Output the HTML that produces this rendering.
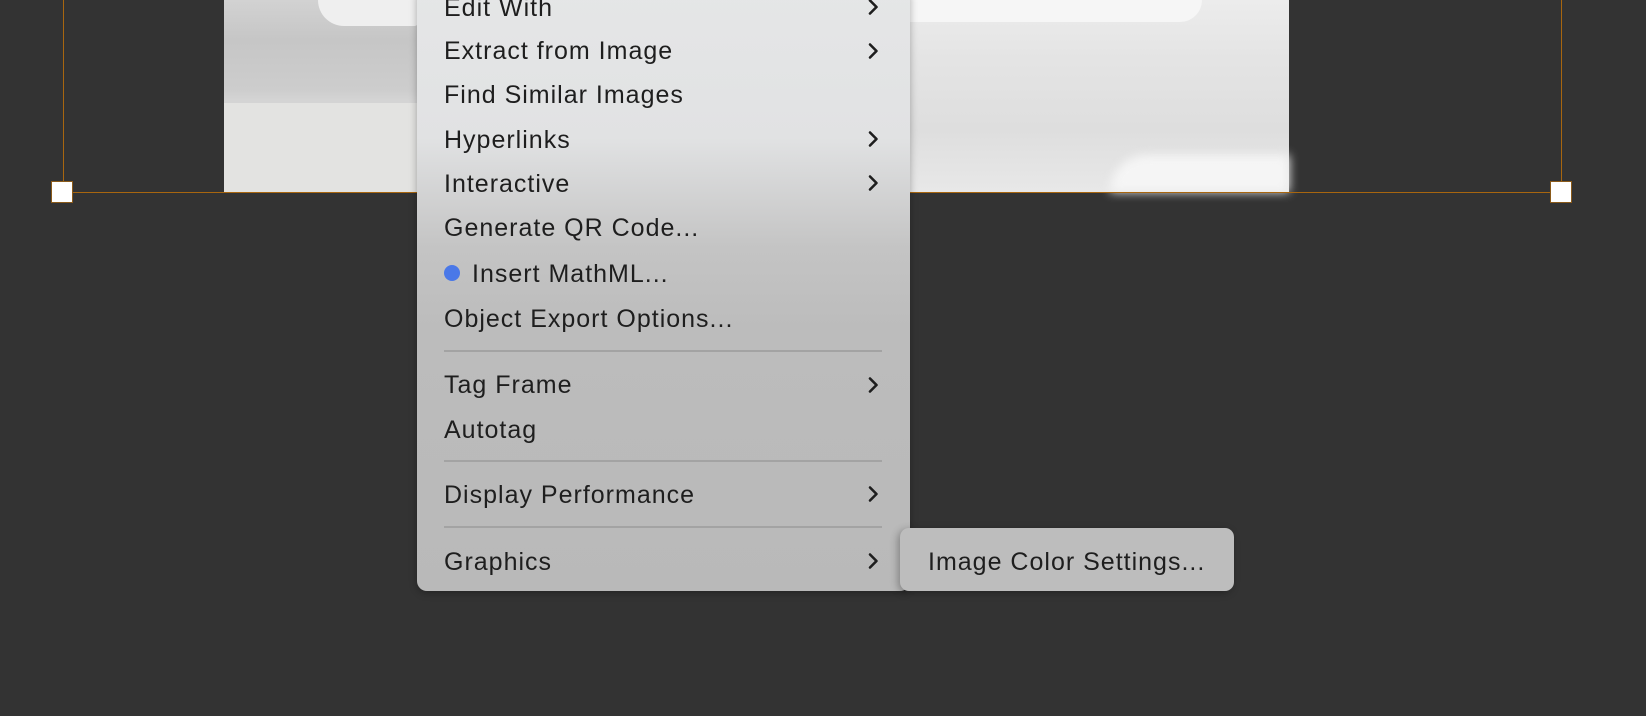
<!DOCTYPE html>
<html><head><meta charset="utf-8"><style>
html,body{margin:0;padding:0;}
body{width:1646px;height:716px;background:#333333;position:relative;overflow:hidden;font-family:"Liberation Sans",sans-serif;}
.img{position:absolute;left:224px;top:0;width:1065px;height:192px;background:linear-gradient(180deg,#d2d2d2 0px,#c6c6c6 40px,#cdcdcd 90px,#d4d4d4 100px,#e0e0e0 192px);}
.img2{position:absolute;left:910px;top:0;width:379px;height:192px;background:linear-gradient(180deg,#ececec 0,#e4e4e4 60px,#dedede 130px,#e8e8e8 192px);}
.pillow1{position:absolute;left:318px;top:0;width:100px;height:26px;background:#efefef;border-radius:0 0 4px 30px;}
.pillow2{position:absolute;left:910px;top:0;width:292px;height:22px;background:#f6f6f6;border-radius:0 0 24px 0;}
.rug{position:absolute;left:224px;top:103px;width:193px;height:89px;background:#e3e3e1;}
.fur{position:absolute;left:1110px;top:155px;width:179px;height:37px;background:#f5f5f5;border-radius:40px 0 0 0;filter:blur(5px);}
.hl{position:absolute;background:#a8660f;}
.handle{position:absolute;width:20px;height:20px;background:#fff;border:1.5px solid #8a5a1a;}
.menu{position:absolute;left:417px;top:-12px;width:493px;height:603px;border-radius:10px;background:linear-gradient(180deg,#e5e6e7 0px,#e1e2e3 150px,#c4c4c4 260px,#bcbcbc 340px,#b9b9b9 603px);box-shadow:0 2px 8px rgba(0,0,0,.3);}
.it{position:absolute;left:444px;font-size:25px;letter-spacing:1px;color:#1e1e1e;line-height:30px;height:30px;white-space:nowrap;}
.chev{position:absolute;left:866px;width:14px;height:18px;}
.sep{position:absolute;left:444px;width:438px;height:2px;background:#a3a3a3;}
.dot{position:absolute;left:444px;top:265px;width:16px;height:16px;border-radius:50%;background:#4a78e8;}
.sub{position:absolute;left:900px;top:528px;width:334px;height:63px;border-radius:9px;background:#bdbdbd;box-shadow:-2px 2px 8px rgba(0,0,0,.3);}
</style></head><body>
<div class="img"></div><div class="img2"></div>
<div class="pillow1"></div><div class="pillow2"></div>
<div class="rug"></div><div class="fur"></div>
<div class="hl" style="left:63px;top:0;width:1px;height:192px"></div>
<div class="hl" style="left:1561px;top:0;width:1px;height:192px"></div>
<div class="hl" style="left:63px;top:192px;width:1498px;height:1px"></div>
<div class="handle" style="left:51px;top:181px"></div>
<div class="handle" style="left:1550px;top:181px"></div>

<div class="menu"></div>
<div class="it" style="top:-7px">Edit With</div>
<div class="it" style="top:36px">Extract from Image</div>
<div class="it" style="top:80px">Find Similar Images</div>
<div class="it" style="top:125px">Hyperlinks</div>
<div class="it" style="top:169px">Interactive</div>
<div class="it" style="top:213px">Generate QR Code...</div>
<div class="dot"></div>
<div class="it" style="top:259px;left:472px">Insert MathML...</div>
<div class="it" style="top:304px">Object Export Options...</div>
<div class="sep" style="top:350px"></div>
<div class="it" style="top:370px">Tag Frame</div>
<div class="it" style="top:415px">Autotag</div>
<div class="sep" style="top:460px"></div>
<div class="it" style="top:480px">Display Performance</div>
<div class="sep" style="top:526px"></div>
<div class="it" style="top:547px">Graphics</div>

<svg class="chev" style="top:-2px" viewBox="0 0 14 18"><path d="M4 2.5 L10.5 9 L4 15.5" fill="none" stroke="#1e1e1e" stroke-width="2.6" stroke-linecap="round" stroke-linejoin="round"/></svg>
<svg class="chev" style="top:42px" viewBox="0 0 14 18"><path d="M4 2.5 L10.5 9 L4 15.5" fill="none" stroke="#1e1e1e" stroke-width="2.6" stroke-linecap="round" stroke-linejoin="round"/></svg>
<svg class="chev" style="top:130px" viewBox="0 0 14 18"><path d="M4 2.5 L10.5 9 L4 15.5" fill="none" stroke="#1e1e1e" stroke-width="2.6" stroke-linecap="round" stroke-linejoin="round"/></svg>
<svg class="chev" style="top:174px" viewBox="0 0 14 18"><path d="M4 2.5 L10.5 9 L4 15.5" fill="none" stroke="#1e1e1e" stroke-width="2.6" stroke-linecap="round" stroke-linejoin="round"/></svg>
<svg class="chev" style="top:376px" viewBox="0 0 14 18"><path d="M4 2.5 L10.5 9 L4 15.5" fill="none" stroke="#1e1e1e" stroke-width="2.6" stroke-linecap="round" stroke-linejoin="round"/></svg>
<svg class="chev" style="top:485px" viewBox="0 0 14 18"><path d="M4 2.5 L10.5 9 L4 15.5" fill="none" stroke="#1e1e1e" stroke-width="2.6" stroke-linecap="round" stroke-linejoin="round"/></svg>
<svg class="chev" style="top:552px" viewBox="0 0 14 18"><path d="M4 2.5 L10.5 9 L4 15.5" fill="none" stroke="#1e1e1e" stroke-width="2.6" stroke-linecap="round" stroke-linejoin="round"/></svg>

<div class="sub"></div>
<div class="it" style="top:547px;left:928px">Image Color Settings...</div>
</body></html>
